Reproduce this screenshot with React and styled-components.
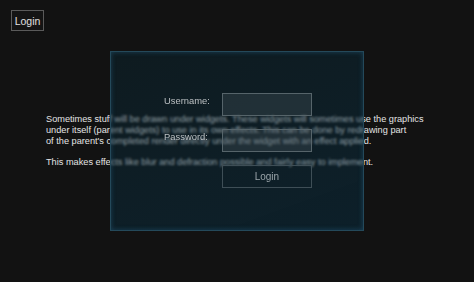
import React from 'react';
import styled, { createGlobalStyle } from 'styled-components';

const Global = createGlobalStyle`
  body {
    margin: 0;
    background: #121212;
    font-family: "Liberation Sans", Arial, sans-serif;
  }
`;

const App = () => {
  return (
    <Page>
      <Global />
      <TopButton>Login</TopButton>
      <Story>
        <p>
          Sometimes stuff will be drawn under widgets. These widgets will sometimes use the graphics
          <br />
          under itself (parent widgets) to use in its own effects. This can be done by redrawing part
          <br />
          of the parent's completed render directly under the widget with an effect applied.
        </p>
        <p>This makes effects like blur and defraction possible and fairly easy to implement.</p>
      </Story>
      <Panel>
        <Form>
          <Label>Username:</Label>
          <Field />
          <Label>Password:</Label>
          <Field type='password' />
          <span />
          <SubmitButton>Login</SubmitButton>
        </Form>
      </Panel>
    </Page>
  );
};

//styled components
const Page = styled.div`
  position: relative;
  width: 474px;
  height: 282px;
  overflow: hidden;
  background: #121212;
  padding: 10px 0 0 11px;
  box-sizing: border-box;
`;
const TopButton = styled.button`
  display: block;
  width: 33px;
  height: 21px;
  padding: 0;
  background: #141414;
  border: 1px solid #5a5a5a;
  color: #e0e0e0;
  font-family: "Liberation Sans", Arial, sans-serif;
  font-size: 10.5px;
`;
const Story = styled.div`
  margin: 83px 0 0 35px;
  color: #e4e4e4;
  font-size: 9.2px;
  line-height: 11px;
  white-space: nowrap;
  p {
    margin: 0 0 10px;
  }
`;
const Panel = styled.div`
  position: absolute;
  left: 110px;
  top: 51px;
  width: 254px;
  height: 180px;
  box-sizing: border-box;
  border: 1px solid #24495a;
  background: linear-gradient(160deg, rgba(10, 40, 52, 0.42), rgba(8, 50, 72, 0.45));
  box-shadow: inset 0 0 5px rgba(40, 110, 150, 0.45);
  backdrop-filter: blur(1px);
  display: flex;
  justify-content: center;
  align-items: flex-start;
  padding-top: 41px;
`;
const Form = styled.div`
  display: grid;
  grid-template-columns: auto 90px;
  grid-auto-rows: 23px;
  column-gap: 12px;
  row-gap: 13px;
  align-items: start;
  margin-left: 2px;
`;
const Label = styled.label`
  color: #bcc0c3;
  font-size: 9.4px;
  line-height: 11px;
  padding-top: 2px;
  justify-self: start;
`;
const Field = styled.input`
  width: 90px;
  height: 23px;
  margin: 0;
  box-sizing: border-box;
  border: 1px solid #56646a;
  background: rgba(80, 92, 98, 0.3);
  outline: none;
`;
const SubmitButton = styled.button`
  width: 90px;
  height: 23px;
  margin: 0;
  box-sizing: border-box;
  border: 1px solid #3e4e56;
  background: transparent;
  color: #9aa4a9;
  font-family: "Liberation Sans", Arial, sans-serif;
  font-size: 10px;
`;

export default App;
